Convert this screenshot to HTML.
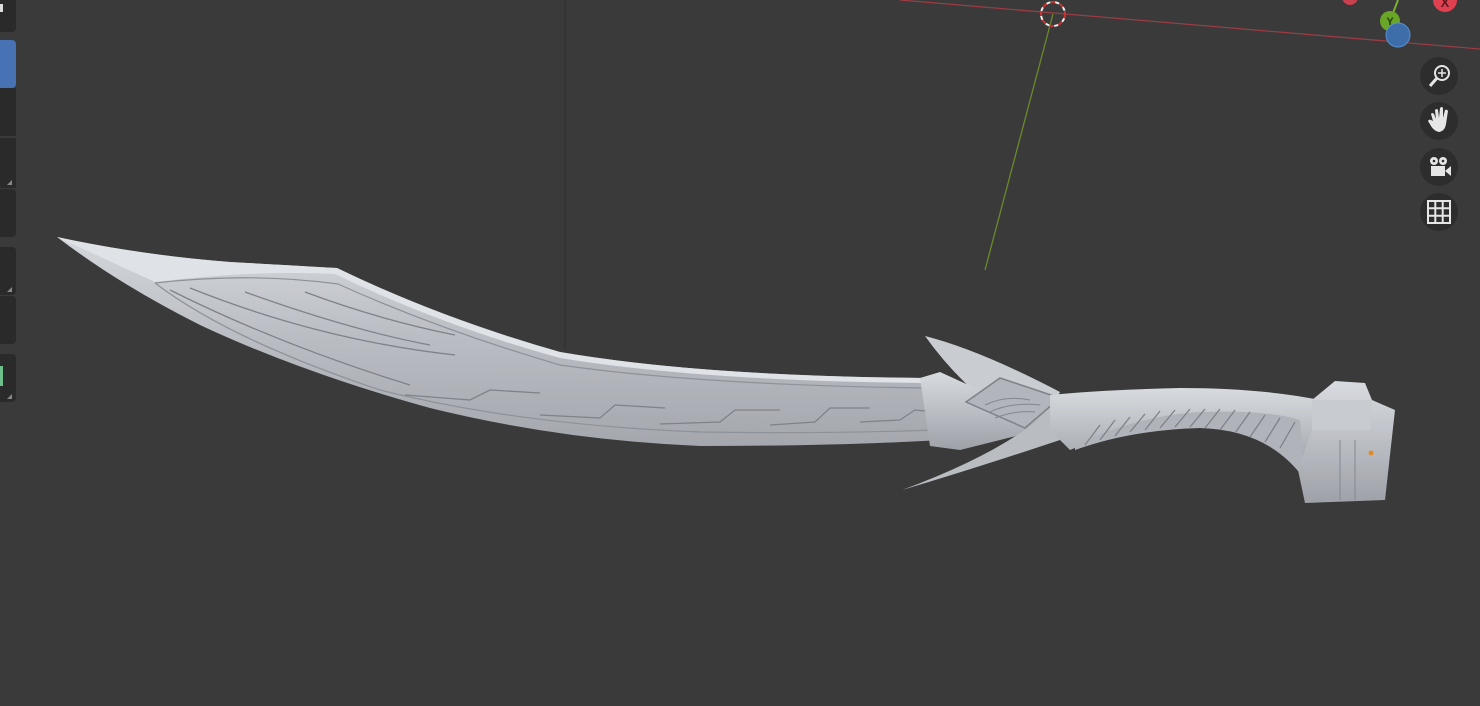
<!DOCTYPE html>
<html><head><meta charset="utf-8"><style>
html,body{margin:0;padding:0;background:#3a3a3a;width:1480px;height:706px;overflow:hidden}
svg{display:block}
</style></head><body>
<svg width="1480" height="706" viewBox="0 0 1480 706" xmlns="http://www.w3.org/2000/svg">
<defs>
<linearGradient id="bl" x1="0" y1="0" x2="0" y2="1">
<stop offset="0" stop-color="#d4d7dc"/><stop offset="0.5" stop-color="#b9bcc2"/><stop offset="1" stop-color="#a4a7ad"/>
</linearGradient>
<linearGradient id="hd" x1="0" y1="0" x2="0" y2="1">
<stop offset="0" stop-color="#d8dbe0"/><stop offset="1" stop-color="#9ea1a7"/>
</linearGradient>
</defs>
<rect width="1480" height="706" fill="#3a3a3a"/>
<!-- faint vertical line -->
<line x1="565" y1="0" x2="565" y2="350" stroke="#2e2e2e" stroke-width="1"/>
<!-- axes -->
<line x1="900" y1="0" x2="1480" y2="49" stroke="#9a3c44" stroke-width="1.3"/>
<line x1="1053" y1="14" x2="985" y2="270" stroke="#6a8a2a" stroke-width="1.3"/>
<circle cx="1053" cy="14" r="12" fill="none" stroke="#c33" stroke-width="2" stroke-dasharray="5 4"/>
<circle cx="1053" cy="14" r="12" fill="none" stroke="#eee" stroke-width="2" stroke-dasharray="4 5" stroke-dashoffset="4.5"/>
<!-- gizmo -->
<line x1="1390" y1="21" x2="1398" y2="0" stroke="#7ab030" stroke-width="2"/>
<circle cx="1350" cy="-3" r="8" fill="#c9404f"/>
<circle cx="1445" cy="0" r="12" fill="#e0404f"/>
<text x="1445" y="7" font-family="Liberation Sans, sans-serif" font-size="13" font-weight="bold" text-anchor="middle" fill="#5a1820">X</text>
<circle cx="1390" cy="21" r="10" fill="#6aa626"/>
<text x="1390" y="25" font-family="Liberation Sans, sans-serif" font-size="11" font-weight="bold" text-anchor="middle" fill="#22400a">Y</text>
<circle cx="1398" cy="35" r="12" fill="#3e6eaa" stroke="#5a8fd0" stroke-width="1"/>
<!-- nav buttons -->
<g fill="#2d2d2d">
<circle cx="1439" cy="76" r="19"/><circle cx="1439" cy="121" r="19"/>
<circle cx="1439" cy="167" r="19"/><circle cx="1439" cy="212" r="19"/>
</g>
<g fill="none" stroke="#e6e6e6" stroke-width="2">
<circle cx="1442" cy="73" r="7"/>
<line x1="1437" y1="78" x2="1430" y2="86" stroke-width="3"/>
<line x1="1442" y1="69" x2="1442" y2="77" stroke-width="1.5"/>
<line x1="1438" y1="73" x2="1446" y2="73" stroke-width="1.5"/>
</g>
<path d="M1433 121 L1431 114 Q1432 112 1434 114 L1436 119 L1435 110 Q1437 108 1438 110 L1439 118 L1440 108 Q1442 106 1443 108 L1443 118 L1445 110 Q1447 109 1448 111 L1446 124 Q1445 131 1439 132 Q1434 131 1431 126 L1428 121 Q1429 119 1431 120 Z" fill="#e6e6e6"/>
<g fill="#e6e6e6">
<circle cx="1434" cy="161" r="4"/><circle cx="1443" cy="161" r="4"/>
<rect x="1431" y="166" width="14" height="10"/><path d="M1445 171 L1451 166 L1451 176 Z"/>
</g>
<circle cx="1434" cy="161" r="1.3" fill="#2d2d2d"/><circle cx="1443" cy="161" r="1.3" fill="#2d2d2d"/>
<g fill="none" stroke="#e6e6e6" stroke-width="2">
<rect x="1428" y="201" width="22" height="22"/>
<line x1="1435.3" y1="201" x2="1435.3" y2="223"/><line x1="1442.7" y1="201" x2="1442.7" y2="223"/>
<line x1="1428" y1="208.3" x2="1450" y2="208.3"/><line x1="1428" y1="215.7" x2="1450" y2="215.7"/>
</g>
<!-- left toolbar -->
<g fill="#2a2a2a">
<rect x="-6" y="-10" width="22" height="42" rx="4"/>
<rect x="-6" y="88" width="22" height="48" rx="0"/>
<rect x="-6" y="138" width="22" height="50" rx="0"/>
<rect x="-6" y="189" width="22" height="48" rx="4"/>
<rect x="-6" y="247" width="22" height="48" rx="4"/>
<rect x="-6" y="296" width="22" height="48" rx="4"/>
<rect x="-6" y="354" width="22" height="48" rx="4"/>
</g>
<rect x="-6" y="40" width="22" height="48" rx="4" fill="#4772b3"/>
<rect x="0" y="4" width="3" height="8" fill="#ddd"/>
<rect x="0" y="366" width="3" height="20" fill="#6ec08a"/>
<g fill="#888"><path d="M12 180 L12 185 L7 185Z"/><path d="M12 287 L12 292 L7 292Z"/><path d="M12 394 L12 399 L7 399Z"/></g>
<!-- blade -->
<path d="M57 237 Q140 255 230 262 Q300 266 337 268 Q440 318 560 352 Q700 376 925 378 L940 440 Q840 446 700 446 Q560 440 430 408 Q300 372 200 325 Q120 285 57 237 Z" fill="url(#bl)"/>
<path d="M57 237 Q140 255 230 262 Q300 266 337 268 Q440 318 560 352 Q700 376 925 378 L925 383 Q700 381 560 358 Q440 325 335 274 Q250 270 155 282 Z" fill="#dfe2e6"/>
<path d="M155 283 Q250 272 338 284 Q440 330 560 365 Q700 385 925 388" fill="none" stroke="#8e9197" stroke-width="1.2"/>
<path d="M155 283 Q230 340 380 390 Q520 425 700 432 Q820 434 935 430" fill="none" stroke="#8e9197" stroke-width="1.2"/>
<g fill="none" stroke="#7f8288" stroke-width="1.3">
<path d="M170 290 Q280 345 410 385"/>
<path d="M190 288 Q320 340 455 355"/>
<path d="M245 292 Q350 330 430 345"/>
<path d="M305 292 Q380 320 455 335"/>
<path d="M405 395 L470 400 L490 390 L540 393"/>
<path d="M540 415 L600 418 L615 405 L665 408"/>
<path d="M660 424 L720 422 L735 410 L780 410"/>
<path d="M770 425 L815 422 L830 408 L870 408"/>
<path d="M860 422 L900 420 L915 410 L935 412"/>
</g>
<!-- guard -->
<path d="M925 336 Q980 350 1060 392 L1010 420 Q960 385 925 336 Z" fill="#c9ccd1"/>
<path d="M920 378 L940 372 L975 388 L1060 392 L1040 430 L960 450 L930 446 Z" fill="url(#hd)"/>
<path d="M966 402 L1000 378 L1060 398 L1025 428 Z" fill="#b2b5bb" stroke="#7e8187" stroke-width="1.5"/>
<g fill="none" stroke="#83868c" stroke-width="1"><path d="M985 405 Q1005 395 1030 400"/><path d="M990 412 Q1010 402 1040 405"/><path d="M995 418 Q1015 410 1035 412"/></g>
<path d="M1055 405 Q1010 450 902 490 Q970 470 1060 440 Z" fill="#b9bcc1"/>
<!-- grip -->
<path d="M1050 395 Q1100 390 1180 388 Q1260 388 1320 400 L1315 470 Q1270 420 1200 420 Q1130 425 1070 450 Q1060 440 1050 430 Z" fill="url(#hd)"/>
<path d="M1075 445 Q1140 415 1200 412 Q1270 410 1300 420 L1305 480 Q1270 430 1200 428 Q1130 430 1075 450 Z" fill="#b0b3b9"/>
<g stroke="#7c7f85" stroke-width="1.2">
<line x1="1085" y1="445" x2="1100" y2="425"/><line x1="1100" y1="440" x2="1115" y2="420"/><line x1="1115" y1="436" x2="1130" y2="417"/><line x1="1130" y1="432" x2="1145" y2="414"/><line x1="1145" y1="430" x2="1160" y2="411"/><line x1="1160" y1="428" x2="1175" y2="410"/><line x1="1175" y1="427" x2="1190" y2="409"/><line x1="1190" y1="427" x2="1205" y2="409"/><line x1="1205" y1="428" x2="1220" y2="409"/><line x1="1220" y1="430" x2="1235" y2="410"/><line x1="1235" y1="433" x2="1250" y2="412"/><line x1="1250" y1="437" x2="1265" y2="415"/><line x1="1265" y1="442" x2="1280" y2="418"/><line x1="1280" y1="448" x2="1295" y2="422"/>
</g>
<!-- pommel -->
<path d="M1312 400 L1335 381 L1365 383 L1372 400 L1395 410 L1385 500 L1305 503 L1298 470 L1312 430 Z" fill="url(#hd)"/>
<path d="M1312 400 L1372 400 L1370 430 L1312 430 Z" fill="#c8cbd0"/>
<line x1="1340" y1="440" x2="1340" y2="500" stroke="#85888e"/>
<line x1="1355" y1="440" x2="1355" y2="500" stroke="#85888e"/>
<circle cx="1371" cy="453" r="2.5" fill="#e08a2a"/>
</svg>
</body></html>
